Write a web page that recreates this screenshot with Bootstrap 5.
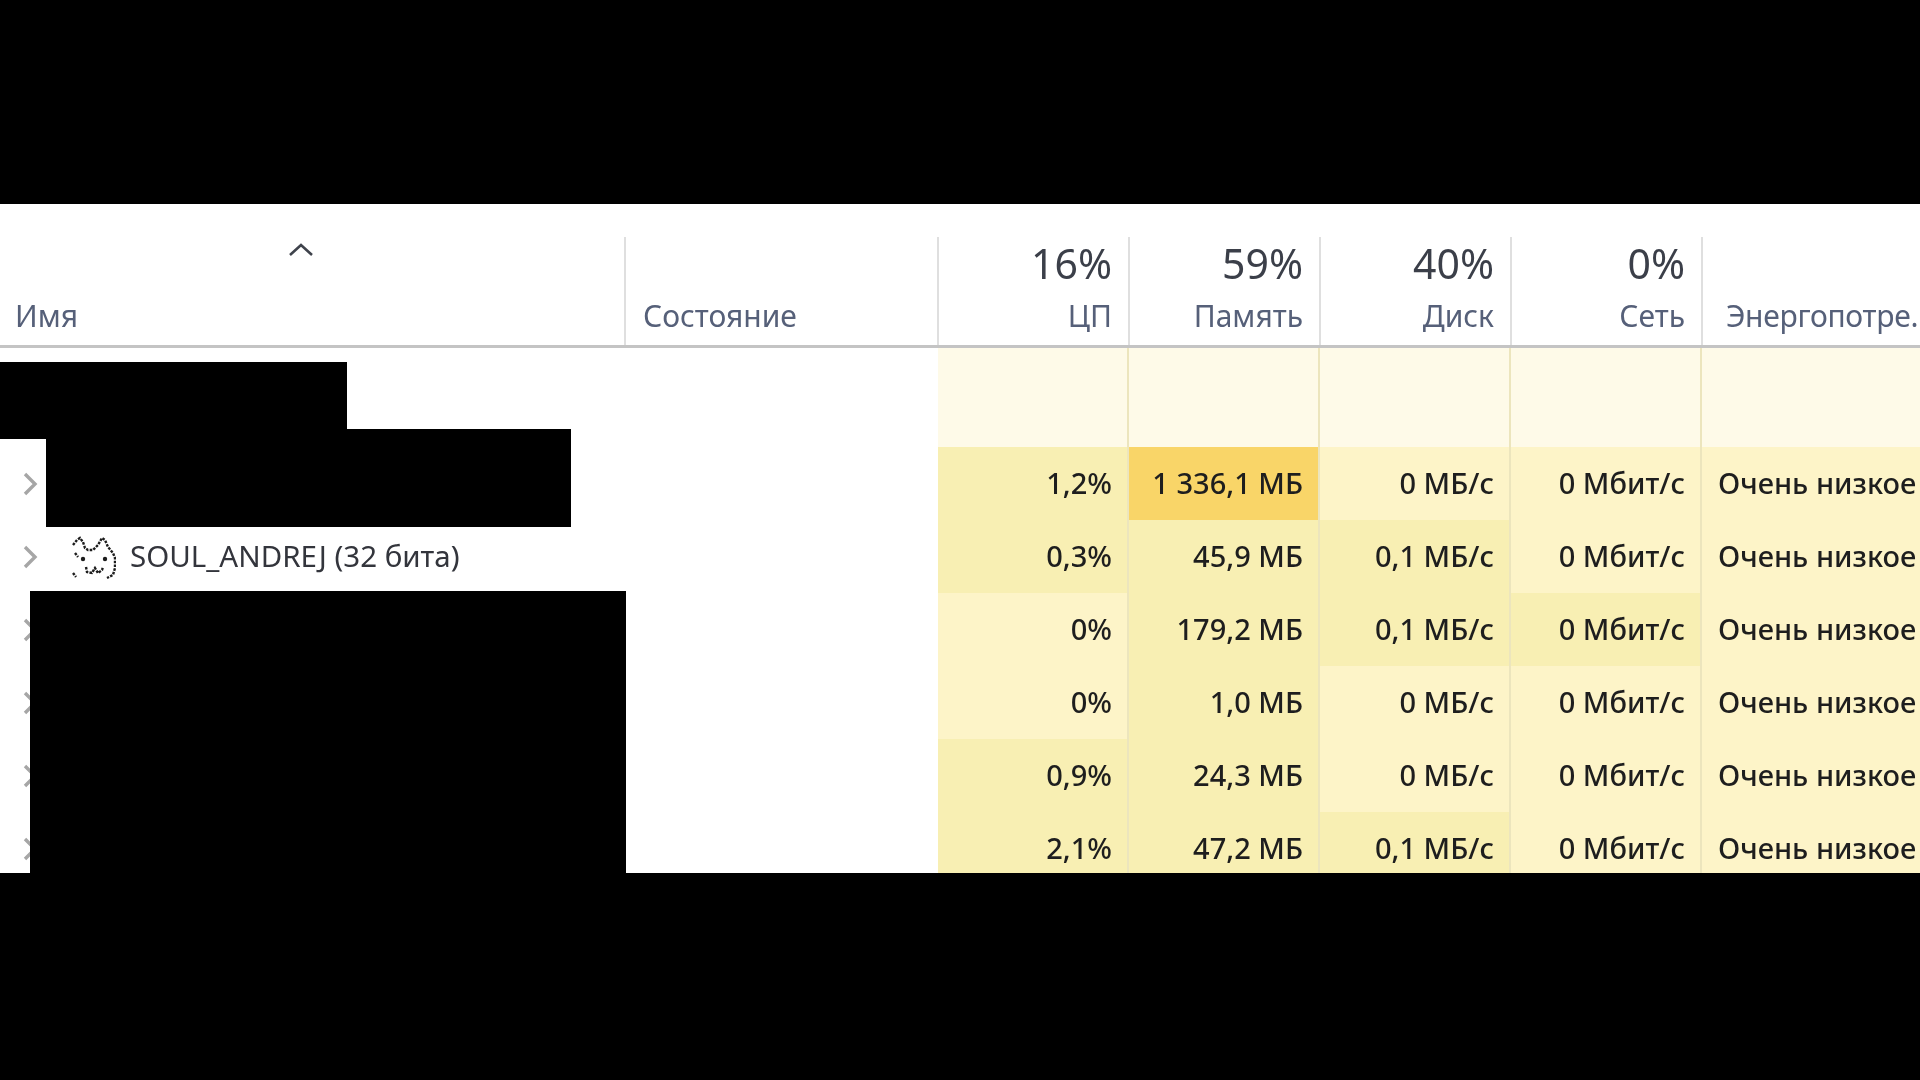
<!doctype html>
<html lang="ru">
<head>
<meta charset="utf-8">
<title>Диспетчер задач</title>
<link href="https://cdn.jsdelivr.net/npm/bootstrap@5.3.0/dist/css/bootstrap.min.css" rel="stylesheet">
<style>
html,body{height:100%;background:#000;overflow:hidden;}
body{font-family:"Noto Sans","Liberation Sans",sans-serif;padding-top:204px;}
.tm-sheet{height:669px;background:#fff;overflow:hidden;position:relative;filter:blur(.5px);}
.tm-head{height:144px;border-bottom:3px solid #c4c4c4;}
.tm-h{height:141px;padding-top:33px;}
.tm-inner{height:108px;border-right:2px solid #dfdfdf;margin-right:-1px;padding:0 16px 0 15px;display:flex;flex-direction:column;justify-content:flex-end;position:relative;}
.tm-w-name{width:625px;flex:none;}
.tm-w-state{width:313px;flex:none;}
.tm-w-num{width:191px;flex:none;}
.tm-w-en{width:218px;flex:none;}
.tm-pct{font-size:41px;line-height:46px;color:#3b3f49;text-align:right;margin-bottom:13px;}
.tm-lbl{font-size:30px;line-height:34px;color:#566079;margin-bottom:12px;white-space:nowrap;}
.tm-lbl-en{letter-spacing:-.3px;}
.tm-lbl-state{padding-left:3px;}
.tm-caret{position:absolute;left:288px;top:6px;}
.tm-row{height:73px;}
.tm-row-group{height:99px;}
.tm-c{height:100%;display:flex;align-items:center;justify-content:flex-end;padding-right:15px;font-size:29px;color:#1e1e1e;white-space:nowrap;border-right:2px solid #ece5bd;}
.tm-c-en{justify-content:flex-start;padding:0 0 0 16px;border-right:0;}
.tm-namecell{height:100%;display:flex;align-items:center;font-size:29.5px;color:#33353c;white-space:nowrap;}
.tm-chev{margin-left:22px;width:16px;flex:none;}
.tm-cat{margin-left:32px;margin-right:14px;flex:none;}
.h0{background:#fefae8;}
.h1{background:#fdf4c8;}
.h2{background:#f8efb3;}
.h3{background:#f9d568;}
.tm-redact{position:absolute;background:#000;}
.r-a{left:0;top:158px;width:347px;height:77px;}
.r-b{left:46px;top:225px;width:525px;height:98px;}
.r-c{left:30px;top:387px;width:596px;height:282px;}
</style>
</head>
<body>
<div class="tm-sheet">
  <div class="tm-head d-flex">
    <div class="tm-h tm-w-name"><div class="tm-inner"><svg class="tm-caret" width="26" height="14" viewBox="0 0 26 14"><path d="M2 12 13 2l11 10" fill="none" stroke="#3f434c" stroke-width="2.6"/></svg><div class="tm-lbl">Имя</div></div></div>
    <div class="tm-h tm-w-state"><div class="tm-inner"><div class="tm-lbl tm-lbl-state">Состояние</div></div></div>
    <div class="tm-h tm-w-num"><div class="tm-inner"><div class="tm-pct">16%</div><div class="tm-lbl text-end">ЦП</div></div></div>
    <div class="tm-h tm-w-num"><div class="tm-inner"><div class="tm-pct">59%</div><div class="tm-lbl text-end">Память</div></div></div>
    <div class="tm-h tm-w-num"><div class="tm-inner"><div class="tm-pct">40%</div><div class="tm-lbl text-end">Диск</div></div></div>
    <div class="tm-h tm-w-num"><div class="tm-inner"><div class="tm-pct">0%</div><div class="tm-lbl text-end">Сеть</div></div></div>
    <div class="tm-h tm-w-en"><div class="tm-inner border-0 ps-4 pe-0"><div class="tm-lbl tm-lbl-en">Энергопотре.</div></div></div>
  </div>

  <div class="tm-row tm-row-group d-flex">
    <div class="tm-w-name"></div><div class="tm-w-state"></div>
    <div class="tm-w-num"><div class="tm-c h0"></div></div>
    <div class="tm-w-num"><div class="tm-c h0"></div></div>
    <div class="tm-w-num"><div class="tm-c h0"></div></div>
    <div class="tm-w-num"><div class="tm-c h0"></div></div>
    <div class="tm-w-en"><div class="tm-c tm-c-en h0"></div></div>
  </div>

  <div class="tm-row d-flex">
    <div class="tm-w-name"><div class="tm-namecell"><svg class="tm-chev" width="16" height="26" viewBox="0 0 16 26"><path d="M3 3l10 10L3 23" fill="none" stroke="#a6a6a6" stroke-width="3.4"/></svg></div></div><div class="tm-w-state"></div>
    <div class="tm-w-num"><div class="tm-c h2">1,2%</div></div>
    <div class="tm-w-num"><div class="tm-c h3">1 336,1 МБ</div></div>
    <div class="tm-w-num"><div class="tm-c h1">0 МБ/с</div></div>
    <div class="tm-w-num"><div class="tm-c h1">0 Мбит/с</div></div>
    <div class="tm-w-en"><div class="tm-c tm-c-en h1">Очень низкое</div></div>
  </div>

  <div class="tm-row d-flex">
    <div class="tm-w-name"><div class="tm-namecell"><svg class="tm-chev" width="16" height="26" viewBox="0 0 16 26"><path d="M3 3l10 10L3 23" fill="none" stroke="#a6a6a6" stroke-width="3.4"/></svg>
      <svg class="tm-cat" width="46" height="46" viewBox="20 9 46 46" fill="none" stroke="#1c1c1c" stroke-width="2.4" stroke-dasharray="2.6 1.2">
        <path d="M23 20l4-5 3-2 3 4 2 6 3 2h5l5-5 4-7 3 2 3 7 5 6 2 5v10l-2 7-6 3"/>
        <path d="M25 28l3 4"/>
        <path d="M23 48l3 4"/>
        <path d="M36 42l1 5 5 1 3-5 3 5 4-3 1-3"/>
        <circle cx="33" cy="34" r="2.2" fill="#1c1c1c" stroke="none"/>
        <circle cx="55" cy="34" r="2.2" fill="#1c1c1c" stroke="none"/>
      </svg><span>SOUL_ANDREJ (32 бита)</span></div></div><div class="tm-w-state"></div>
    <div class="tm-w-num"><div class="tm-c h2">0,3%</div></div>
    <div class="tm-w-num"><div class="tm-c h2">45,9 МБ</div></div>
    <div class="tm-w-num"><div class="tm-c h2">0,1 МБ/с</div></div>
    <div class="tm-w-num"><div class="tm-c h1">0 Мбит/с</div></div>
    <div class="tm-w-en"><div class="tm-c tm-c-en h1">Очень низкое</div></div>
  </div>

  <div class="tm-row d-flex">
    <div class="tm-w-name"><div class="tm-namecell"><svg class="tm-chev" width="16" height="26" viewBox="0 0 16 26"><path d="M3 3l10 10L3 23" fill="none" stroke="#a6a6a6" stroke-width="3.4"/></svg></div></div><div class="tm-w-state"></div>
    <div class="tm-w-num"><div class="tm-c h1">0%</div></div>
    <div class="tm-w-num"><div class="tm-c h2">179,2 МБ</div></div>
    <div class="tm-w-num"><div class="tm-c h2">0,1 МБ/с</div></div>
    <div class="tm-w-num"><div class="tm-c h2">0 Мбит/с</div></div>
    <div class="tm-w-en"><div class="tm-c tm-c-en h1">Очень низкое</div></div>
  </div>

  <div class="tm-row d-flex">
    <div class="tm-w-name"><div class="tm-namecell"><svg class="tm-chev" width="16" height="26" viewBox="0 0 16 26"><path d="M3 3l10 10L3 23" fill="none" stroke="#a6a6a6" stroke-width="3.4"/></svg></div></div><div class="tm-w-state"></div>
    <div class="tm-w-num"><div class="tm-c h1">0%</div></div>
    <div class="tm-w-num"><div class="tm-c h2">1,0 МБ</div></div>
    <div class="tm-w-num"><div class="tm-c h1">0 МБ/с</div></div>
    <div class="tm-w-num"><div class="tm-c h1">0 Мбит/с</div></div>
    <div class="tm-w-en"><div class="tm-c tm-c-en h1">Очень низкое</div></div>
  </div>

  <div class="tm-row d-flex">
    <div class="tm-w-name"><div class="tm-namecell"><svg class="tm-chev" width="16" height="26" viewBox="0 0 16 26"><path d="M3 3l10 10L3 23" fill="none" stroke="#a6a6a6" stroke-width="3.4"/></svg></div></div><div class="tm-w-state"></div>
    <div class="tm-w-num"><div class="tm-c h2">0,9%</div></div>
    <div class="tm-w-num"><div class="tm-c h2">24,3 МБ</div></div>
    <div class="tm-w-num"><div class="tm-c h1">0 МБ/с</div></div>
    <div class="tm-w-num"><div class="tm-c h1">0 Мбит/с</div></div>
    <div class="tm-w-en"><div class="tm-c tm-c-en h1">Очень низкое</div></div>
  </div>

  <div class="tm-row d-flex">
    <div class="tm-w-name"><div class="tm-namecell"><svg class="tm-chev" width="16" height="26" viewBox="0 0 16 26"><path d="M3 3l10 10L3 23" fill="none" stroke="#a6a6a6" stroke-width="3.4"/></svg></div></div><div class="tm-w-state"></div>
    <div class="tm-w-num"><div class="tm-c h2">2,1%</div></div>
    <div class="tm-w-num"><div class="tm-c h2">47,2 МБ</div></div>
    <div class="tm-w-num"><div class="tm-c h2">0,1 МБ/с</div></div>
    <div class="tm-w-num"><div class="tm-c h1">0 Мбит/с</div></div>
    <div class="tm-w-en"><div class="tm-c tm-c-en h1">Очень низкое</div></div>
  </div>

  <div class="tm-redact r-a"></div>
  <div class="tm-redact r-b"></div>
  <div class="tm-redact r-c"></div>
</div>
</body>
</html>
